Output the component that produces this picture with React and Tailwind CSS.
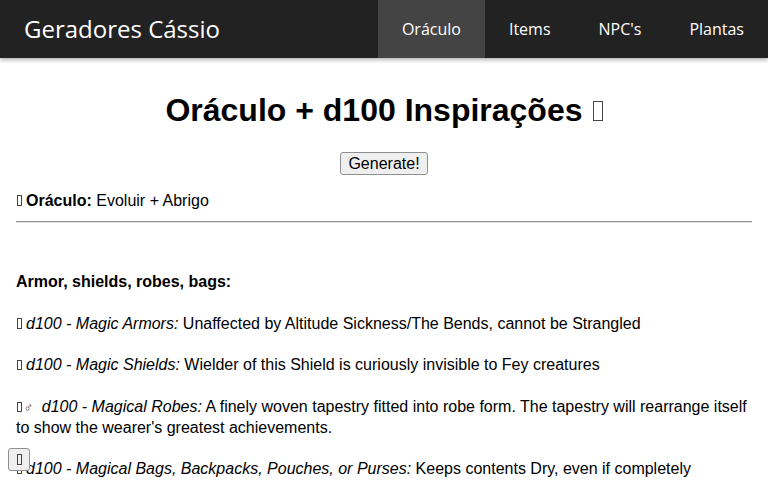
import { useState } from 'react';

const navItems = ['Oráculo', 'Items', "NPC's", 'Plantas'];

// missing-glyph box, the emoji in the original page show up this way
function Tofu() {
  return <span className="inline-block w-[0.3em] h-[0.64em] border border-[#444] ml-[0.05em]" />;
}

const entries = [
  { label: 'd100 - Magic Armors:', text: 'Unaffected by Altitude Sickness/The Bends, cannot be Strangled' },
  { label: 'd100 - Magic Shields:', text: 'Wielder of this Shield is curiously invisible to Fey creatures' },
  { label: 'd100 - Magical Robes:', text: "A finely woven tapestry fitted into robe form. The tapestry will rearrange itself to show the wearer's greatest achievements.", male: true },
  { label: 'd100 - Magical Bags, Backpacks, Pouches, or Purses:', text: 'Keeps contents Dry, even if completely submerged in water for any length of time.' },
];

export default function App() {
  const [active, setActive] = useState('Oráculo');

  return (
    <div className="min-h-screen bg-white text-black" style={{ fontFamily: '"Liberation Sans", Arial, sans-serif' }}>
      <nav className="h-[58px] bg-[#222] flex items-center justify-between shadow-[0_2px_4px_rgba(0,0,0,0.3)] relative z-10" style={{ fontFamily: '"Open Sans", sans-serif' }}>
        <span className="pl-6 text-[24px] text-white">Geradores Cássio</span>
        <ul className="flex h-full">
          {navItems.map((item) => (
            <li
              key={item}
              onClick={() => setActive(item)}
              className={`flex items-center px-6 text-[16px] text-white cursor-pointer ${active === item ? 'bg-[#444]' : ''}`}
            >
              {item}
            </li>
          ))}
        </ul>
      </nav>

      <main className="px-4">
        <h1 className="mt-[34px] text-center text-[32px] leading-[37px] font-bold">
          Oráculo + d100 Inspirações <Tofu />
        </h1>

        <div className="mt-[23px] flex justify-center">
          <button className="h-[23px] px-[7px] text-[16px] leading-[19px] bg-[#efefef] border border-[#8f8f8f] rounded-[3px]">
            Generate!
          </button>
        </div>

        <p className="mt-[15.6px] text-[16px] leading-[20.8px]">
          <Tofu /> <b>Oráculo:</b> Evoluir + Abrigo
        </p>

        <hr className="mt-[10px] border-0 border-t border-t-[#9a9a9a] border-b border-b-[#dcdcdc]" />

        <p className="mt-[48.6px] text-[16px] leading-[20.8px] font-bold">Armor, shields, robes, bags:</p>

        {entries.map((e) => (
          <p key={e.label} className="mt-[20.8px] text-[16px] leading-[20.8px]">
            <Tofu />
            {e.male && <span className="ml-[2px] mr-[4px] text-[13px] leading-none text-[#444]">♂</span>}
            {' '}
            <i>{e.label}</i> {e.text}
          </p>
        ))}
      </main>

      <button className="fixed left-2 bottom-[9px] w-[22px] h-[23px] flex items-center justify-center text-[16px] leading-none bg-[#efefef] border border-[#8f8f8f] rounded-[3px]">
        <Tofu />
      </button>
    </div>
  );
}
